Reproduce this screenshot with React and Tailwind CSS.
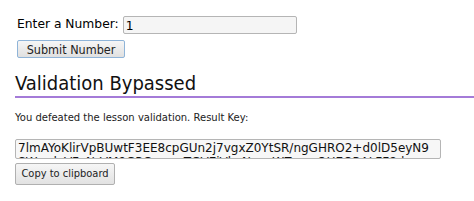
export default function App() {
  return (
    <div className="min-h-[201px] w-full bg-white font-['DejaVu_Sans',sans-serif] text-black">
      <div className="pl-[17px] pt-[16px]">
        <div className="flex items-end text-[12.3px] leading-[15px]">
          <label htmlFor="num" className="mb-[2px] mr-[4px]">Enter a Number:</label>
          <input
            id="num"
            defaultValue="1"
            className="h-[18px] w-[174px] rounded-[2px] border border-[#b5b5b5] bg-[#f5f5f5] px-[2px] pt-[1px] text-[12.3px] leading-[15px] outline-none"
          />
        </div>
        <button className="mt-[6px] flex h-[18px] w-[108px] items-center justify-center rounded-[2px] border border-[#8fb4d8] bg-gradient-to-b from-[#f6f6f6] to-[#e0e0e0] font-['DejaVu_Sans_Condensed','DejaVu_Sans',sans-serif] text-[12.5px] leading-[15px] text-[#222]">
          Submit Number
        </button>
      </div>

      <div className="pl-[15px] pt-[13px]">
        <h2 className="font-['DejaVu_Sans_Condensed','DejaVu_Sans',sans-serif] text-[20px] leading-[24px] font-normal text-[#111]">
          Validation Bypassed
        </h2>
        <div className="mt-[1px] h-[2px] w-full bg-[#a47bd8]" />
        <p className="mt-[14px] text-[10px] leading-[12px] text-[#222]">
          You defeated the lesson validation. Result Key:
        </p>
        <textarea
          readOnly
          rows={1}
          defaultValue="7lmAYoKlirVpBUwtF3EE8cpGUn2j7vgxZ0YtSR/ngGHRO2+d0lD5eyN9 SWmdxVFoNrVM9GRCnqweTGVEiVkaNcaoWZqweQHEORALFF8dqp"
          className="mt-[15px] block h-[20px] w-[426px] resize-none overflow-hidden rounded-[2px] border border-[#b5b5b5] bg-[#f7f7f7] px-[2px] pt-[1px] text-[12px] leading-[14px] text-[#111] outline-none"
        />
        <button className="mt-[4px] flex h-[22px] w-[100px] items-center justify-center rounded-[2px] border border-[#b0b0b0] bg-gradient-to-b from-[#f6f6f6] to-[#e2e2e2] font-['DejaVu_Sans_Condensed','DejaVu_Sans',sans-serif] text-[11px] leading-[14px] text-[#222]">
          Copy to clipboard
        </button>
      </div>
    </div>
  )
}
